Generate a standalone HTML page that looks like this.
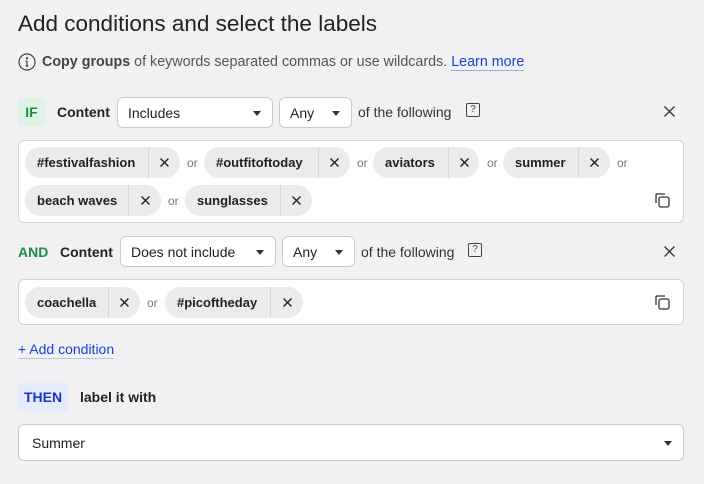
<!DOCTYPE html>
<html><head><style>
*{box-sizing:border-box;margin:0;padding:0}
body{width:704px;height:484px;background:#f1f1f4;font-family:"Liberation Sans",sans-serif;color:#222;position:relative;overflow:hidden}
.a{position:absolute}
.sel{position:absolute;background:#fff;border:1px solid #c9cad0;border-radius:6px;font-size:14px;padding-left:10px;display:flex;align-items:center;color:#222}
.sel:after{content:"";position:absolute;right:11px;top:50%;margin-top:-2px;border-left:4px solid transparent;border-right:4px solid transparent;border-top:5px solid #333}
.box{position:absolute;left:18px;width:666px;background:#fff;border:1px solid #d3d4d9;border-radius:6px}
.chip{position:absolute;height:31px;background:#ebebee;border-radius:16px;font-size:13px;font-weight:bold;display:flex;align-items:center}
.chip .t{padding-left:12px;height:100%;display:flex;align-items:center;border-right:1px solid #d3d4d9}
.chip .x{flex:1;display:flex;justify-content:center;align-items:center}
.or{position:absolute;font-size:12px;color:#777}
.q{position:absolute;width:14px;height:14px;border:1px solid #444;border-radius:2px;font-size:10px;text-align:center;line-height:12px;color:#444}
</style></head><body>
<div class="a" style="left:18px;top:11px;font-size:22.5px;color:#222">Add conditions and select the labels</div>
<svg class="a" style="left:18px;top:53px" width="18" height="18" viewBox="0 0 18 18" fill="none" stroke="#444" stroke-width="1.2"><circle cx="9" cy="9" r="8"/><path d="M9 8v5M7.5 13h3M7.5 8H9"/><circle cx="9" cy="5.3" r=".6" fill="#444"/></svg>
<div class="a" style="left:42px;top:54px;font-size:14.3px;color:#555"><b style="color:#444">Copy groups</b> of keywords separated commas or use wildcards. <span style="color:#1a3fd8;border-bottom:1px solid #9aa8e8">Learn more</span></div>

<div class="a" style="left:18px;top:98px;width:27px;height:28px;background:#dff3e4;color:#1e8b45;font-weight:bold;font-size:14px;text-align:center;line-height:28px">IF</div>
<div class="a" style="left:57px;top:104px;font-size:14px;font-weight:bold">Content</div>
<div class="sel" style="left:117px;top:97px;width:156px;height:31px">Includes</div>
<div class="sel" style="left:279px;top:97px;width:73px;height:31px">Any</div>
<div class="a" style="left:358px;top:104px;font-size:14px;color:#333">of the following</div>
<div class="q" style="left:466px;top:103px">?</div>
<svg class="a" style="left:664px;top:106px" width="11" height="11" viewBox="0 0 11 11" stroke="#333" stroke-width="1.3"><path d="M0.5 0.5l10 10M10.5 0.5l-10 10"/></svg>

<div class="box" style="top:140px;height:83px"></div>
<div class="chip" style="left:25px;top:147px;width:155px"><span class="t" style="width:124px">#festivalfashion</span><span class="x"><svg width="9" height="9" viewBox="0 0 9 9" stroke="#222" stroke-width="1.4"><path d="M.5.5l8 8M8.5.5l-8 8"/></svg></span></div>
<div class="or" style="left:187px;top:156px">or</div>
<div class="chip" style="left:204px;top:147px;width:146px"><span class="t" style="width:115px">#outfitoftoday</span><span class="x"><svg width="9" height="9" viewBox="0 0 9 9" stroke="#222" stroke-width="1.4"><path d="M.5.5l8 8M8.5.5l-8 8"/></svg></span></div>
<div class="or" style="left:357px;top:156px">or</div>
<div class="chip" style="left:373px;top:147px;width:106px"><span class="t" style="width:76px">aviators</span><span class="x"><svg width="9" height="9" viewBox="0 0 9 9" stroke="#222" stroke-width="1.4"><path d="M.5.5l8 8M8.5.5l-8 8"/></svg></span></div>
<div class="or" style="left:487px;top:156px">or</div>
<div class="chip" style="left:503px;top:147px;width:107px"><span class="t" style="width:76px">summer</span><span class="x"><svg width="9" height="9" viewBox="0 0 9 9" stroke="#222" stroke-width="1.4"><path d="M.5.5l8 8M8.5.5l-8 8"/></svg></span></div>
<div class="or" style="left:617px;top:156px">or</div>
<div class="chip" style="left:25px;top:185px;width:136px"><span class="t" style="width:104px">beach waves</span><span class="x"><svg width="9" height="9" viewBox="0 0 9 9" stroke="#222" stroke-width="1.4"><path d="M.5.5l8 8M8.5.5l-8 8"/></svg></span></div>
<div class="or" style="left:168px;top:194px">or</div>
<div class="chip" style="left:185px;top:185px;width:127px"><span class="t" style="width:96px">sunglasses</span><span class="x"><svg width="9" height="9" viewBox="0 0 9 9" stroke="#222" stroke-width="1.4"><path d="M.5.5l8 8M8.5.5l-8 8"/></svg></span></div>
<svg class="a" style="left:654px;top:192px" width="17" height="17" viewBox="0 0 17 17" fill="none" stroke="#333" stroke-width="1.3"><path d="M2 11V3a1 1 0 0 1 1-1h8"/><rect x="5" y="5" width="10" height="10" rx="2"/></svg>

<div class="a" style="left:18px;top:244px;color:#1e8b45;font-weight:bold;font-size:14px">AND</div>
<div class="a" style="left:60px;top:244px;font-size:14px;font-weight:bold">Content</div>
<div class="sel" style="left:120px;top:236px;width:156px;height:31px">Does not include</div>
<div class="sel" style="left:282px;top:236px;width:73px;height:31px">Any</div>
<div class="a" style="left:361px;top:244px;font-size:14px;color:#333">of the following</div>
<div class="q" style="left:468px;top:243px">?</div>
<svg class="a" style="left:664px;top:246px" width="11" height="11" viewBox="0 0 11 11" stroke="#333" stroke-width="1.3"><path d="M0.5 0.5l10 10M10.5 0.5l-10 10"/></svg>

<div class="box" style="top:279px;height:46px"></div>
<div class="chip" style="left:25px;top:287px;width:115px"><span class="t" style="width:84px">coachella</span><span class="x"><svg width="9" height="9" viewBox="0 0 9 9" stroke="#222" stroke-width="1.4"><path d="M.5.5l8 8M8.5.5l-8 8"/></svg></span></div>
<div class="or" style="left:147px;top:296px">or</div>
<div class="chip" style="left:165px;top:287px;width:138px"><span class="t" style="width:106px">#picoftheday</span><span class="x"><svg width="9" height="9" viewBox="0 0 9 9" stroke="#222" stroke-width="1.4"><path d="M.5.5l8 8M8.5.5l-8 8"/></svg></span></div>
<svg class="a" style="left:654px;top:294px" width="17" height="17" viewBox="0 0 17 17" fill="none" stroke="#333" stroke-width="1.3"><path d="M2 11V3a1 1 0 0 1 1-1h8"/><rect x="5" y="5" width="10" height="10" rx="2"/></svg>

<div class="a" style="left:18px;top:341px;font-size:14px;color:#1a3fd8;border-bottom:1px solid #b8c3ee;padding-bottom:1px">+ Add condition</div>

<div class="a" style="left:18px;top:383px;width:50px;height:28px;background:#e4ebfd;color:#1a33cc;font-weight:bold;font-size:14px;text-align:center;line-height:28px">THEN</div>
<div class="a" style="left:80px;top:389px;font-size:14px;font-weight:bold">label it with</div>
<div class="sel" style="left:18px;top:424px;width:666px;height:37px;padding-left:13px">Summer</div>
</body></html>
